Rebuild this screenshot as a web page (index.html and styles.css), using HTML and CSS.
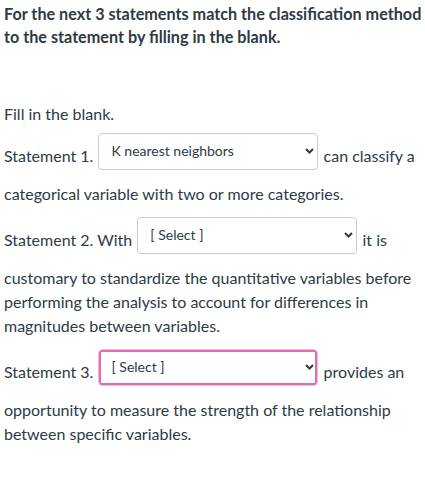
FILE: index.html
```html
<!DOCTYPE html>
<html lang="en">

<head>
    <meta charset="UTF-8">
    <meta name="viewport" content="width=device-width, initial-scale=1.0">
    <title>Quiz question</title>
    <link rel="stylesheet" href="styles.css">
</head>

<body>
    <div class="question">
        <p class="question-title">For the next 3 statements match the classification method to the statement by filling in the blank.</p>

        <p class="question-lead">Fill in the blank.</p>

        <p class="statement">Statement 1. <span class="dropdown">
                <select>
                    <option>K nearest neighbors</option>
                </select>
                <svg class="chevron" width="9" height="6" viewBox="0 0 9 6"><path d="M1 1l3.5 3.5L8 1" fill="none" stroke="#2d3b45" stroke-width="2" /></svg>
            </span> can classify a categorical variable with two or more categories.</p>

        <p class="statement">Statement 2. With <span class="dropdown">
                <select>
                    <option>[ Select ]</option>
                </select>
                <svg class="chevron" width="9" height="6" viewBox="0 0 9 6"><path d="M1 1l3.5 3.5L8 1" fill="none" stroke="#2d3b45" stroke-width="2" /></svg>
            </span> it is customary to standardize the quantitative variables before performing the analysis to account for differences in magnitudes between variables.</p>

        <p class="statement">Statement 3. <span class="dropdown focused">
                <select>
                    <option>[ Select ]</option>
                </select>
                <svg class="chevron" width="9" height="6" viewBox="0 0 9 6"><path d="M1 1l3.5 3.5L8 1" fill="none" stroke="#2d3b45" stroke-width="2" /></svg>
            </span> provides an opportunity to measure the strength of the relationship between specific variables.</p>
    </div>
</body>

</html>
```

FILE: styles.css
```css
* {
    margin: 0;
    padding: 0;
    box-sizing: border-box;
}

:root {
    --text: #2d3b45;
    --border: #c7cdd1;
    --focus: #fa5fb4;
}

body {
    background: white;
    color: var(--text);
    font-family: Lato, 'Open Sans', sans-serif;
    font-size: 16px;
}

.question {
    padding: 2px 0 0 4px;
}

.question-title {
    font-weight: bold;
    font-size: 16.2px;
    line-height: 23px;
}

.question-lead {
    line-height: 24px;
    margin-top: 54px;
}

.statement {
    max-width: 416px;
    line-height: 24px;
    margin-top: 11px;
}

.question-lead + .statement {
    margin-top: 7px;
}

.dropdown {
    position: relative;
    display: inline-block;
    vertical-align: middle;
    margin: 0 1px 12px;
    width: 220px;
}

.dropdown select {
    display: block;
    width: 100%;
    height: 37px;
    padding: 0 24px 2px 12px;
    border: 1px solid var(--border);
    border-radius: 4px;
    background: white;
    color: var(--text);
    font-family: Lato, 'Open Sans', sans-serif;
    font-size: 14px;
    appearance: none;
    -webkit-appearance: none;
    outline: none;
}

.dropdown.focused select {
    box-shadow: inset 0 0 0 2px var(--focus);
    border-radius: 4px;
}

.chevron {
    position: absolute;
    right: 4px;
    top: 15px;
}
```
